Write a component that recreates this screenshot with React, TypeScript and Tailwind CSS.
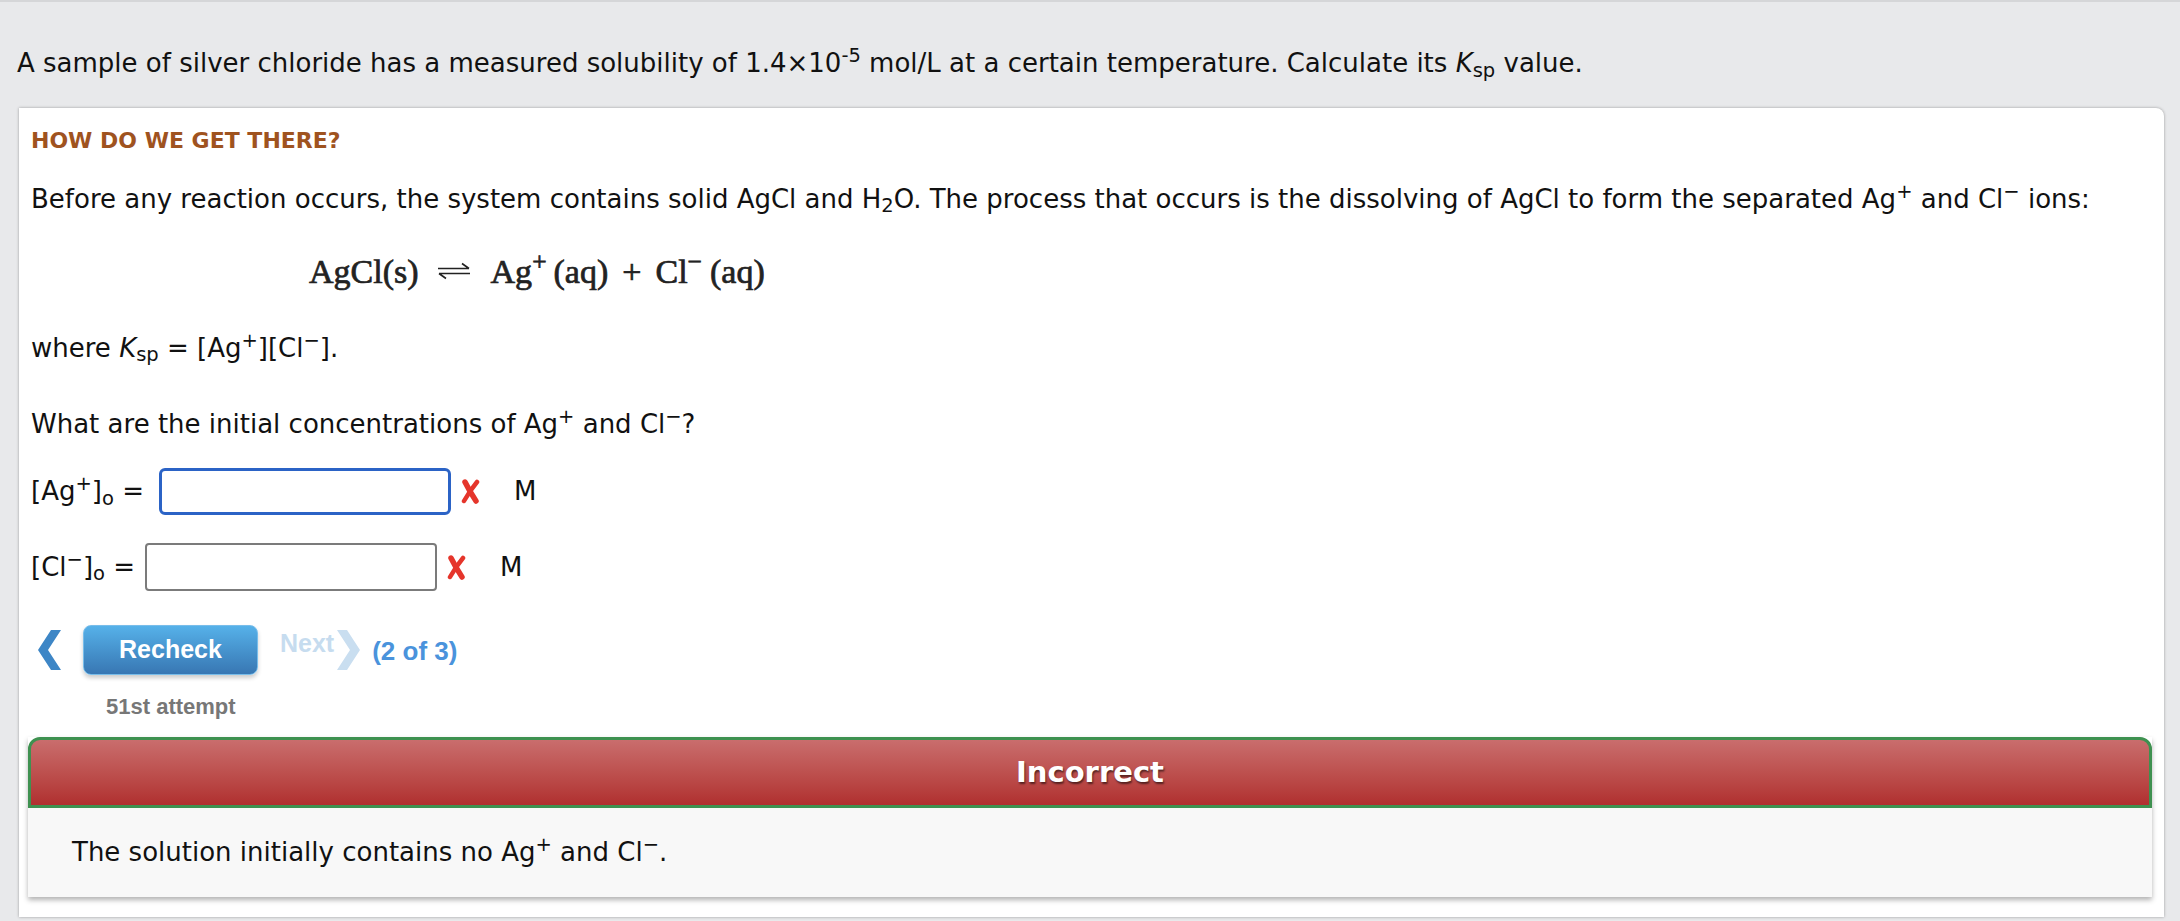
import React from "react"

const sans = { fontFamily: '"DejaVu Sans", Verdana, sans-serif' }

function Cross() {
    return (
        <svg width="21" height="25" viewBox="0 0 21 25" className="shrink-0">
            <path d="M5 3 C8 9 12 16 16 22" stroke="#e5352b" strokeWidth="5.5" strokeLinecap="round" fill="none" />
            <path d="M17 3 C12 9 8 15 4 22" stroke="#e5352b" strokeWidth="4.5" strokeLinecap="round" fill="none" />
        </svg>
    )
}

function Chevron({ dir, color }: { dir: "left" | "right"; color: string }) {
    const pts = dir === "left" ? "14,0 24,0 11,20 24,40 14,40 1,20" : "1,0 11,0 24,20 11,40 1,40 14,20"
    return (
        <svg width="25" height="40" viewBox="0 0 25 40">
            <polygon points={pts} fill={color} />
        </svg>
    )
}

function Harpoons() {
    return (
        <svg width="34" height="18" viewBox="0 0 34 18" className="ml-[18px] mr-[20px] inline-block">
            <path d="M1 6.5 H32 M32 6.5 L25 1.5" stroke="#222" strokeWidth="1.6" fill="none" />
            <path d="M33 11.5 H2 M2 11.5 L9 16.5" stroke="#222" strokeWidth="1.6" fill="none" />
        </svg>
    )
}

const Ksp = () => (
    <>
        <i>K</i>
        <sub>sp</sub>
    </>
)

export default function App() {
    return (
        <div className="min-h-[921px] w-[2180px] bg-[#e8e9eb] border-t-2 border-[#d5d6d8] text-[#111]" style={sans}>
            <div className="h-[106px] pt-[44px] pl-[17px] text-[26px] leading-[34px]">
                A sample of silver chloride has a measured solubility of 1.4×10<sup>-5</sup> mol/L at a certain temperature. Calculate its <Ksp /> value.
            </div>

            <div className="ml-[19px] mr-[16px] h-[809px] bg-white rounded-tr-[8px] shadow-[0_0_3px_rgba(0,0,0,0.35)] pl-[12px] pr-[12px]">
                <div className="h-[64px] flex items-center text-[22px] font-bold text-[#9f531f]">HOW DO WE GET THERE?</div>

                <div className="h-[54px] flex items-center text-[26px] whitespace-nowrap">
                    <span>
                        Before any reaction occurs, the system contains solid AgCl and H<sub>2</sub>O. The process that occurs is the dissolving of AgCl to form the separated Ag<sup>+</sup> and Cl<sup>−</sup> ions:
                    </span>
                </div>

                <div className="h-[90px] flex items-center pl-[278px] text-[34px] text-[#222] [-webkit-text-stroke:0.7px_#222]" style={{ fontFamily: '"Liberation Serif", "DejaVu Serif", serif' }}>
                    <span>AgCl(s)</span>
                    <Harpoons />
                    <span>
                        Ag<sup>+</sup>
                    </span>
                    <span className="ml-[7px]">(aq)</span>
                    <span className="mx-[14px]">+</span>
                    <span>
                        Cl<sup>−</sup>
                    </span>
                    <span className="ml-[8px]">(aq)</span>
                </div>

                <div className="h-[64px] flex items-center text-[26px]">
                    <span>
                        where <Ksp /> = [Ag<sup>+</sup>][Cl<sup>−</sup>].
                    </span>
                </div>

                <div className="h-[88px] flex items-center text-[26px]">
                    <span>
                        What are the initial concentrations of Ag<sup>+</sup> and Cl<sup>−</sup>?
                    </span>
                </div>

                <div className="h-[47px] flex items-center text-[26px]">
                    <span>
                        [Ag<sup>+</sup>]<sub>o</sub> =
                    </span>
                    <div className="ml-[15px] w-[292px] h-[47px] border-[3px] border-[#2b63c6] rounded-[6px] bg-white" />
                    <span className="ml-[9px]">
                        <Cross />
                    </span>
                    <span className="ml-[33px]">M</span>
                </div>

                <div className="mt-[28px] h-[48px] flex items-center text-[26px]">
                    <span>
                        [Cl<sup>−</sup>]<sub>o</sub> =
                    </span>
                    <div className="ml-[10px] w-[292px] h-[48px] border-2 border-[#7b7b7b] rounded-[4px] bg-white" />
                    <span className="ml-[9px]">
                        <Cross />
                    </span>
                    <span className="ml-[33px]">M</span>
                </div>

                <div className="mt-[34px] h-[50px] flex items-center" style={{ fontFamily: '"Liberation Sans", Arial, sans-serif' }}>
                    <span className="ml-[6px]">
                        <Chevron dir="left" color="#3d86c6" />
                    </span>
                    <button className="ml-[21px] w-[175px] h-[50px] rounded-[8px] border border-[#78bdea] bg-gradient-to-b from-[#56b1e9] to-[#3877b3] text-white font-bold text-[25px] shadow-[0_3px_4px_rgba(0,0,0,0.2)]">
                        Recheck
                    </button>
                    <span className="ml-[22px] -mt-[12px] text-[25px] font-bold text-[#c6dcef]">Next</span>
                    <span className="ml-[2px]">
                        <Chevron dir="right" color="#c9def0" />
                    </span>
                    <span className="ml-[11px] mt-[2px] text-[26px] font-bold text-[#4a93dc]">(2 of 3)</span>
                </div>

                <div className="h-[62px] flex items-center pl-[75px] text-[22px] font-bold text-[#777]" style={{ fontFamily: '"Liberation Sans", Arial, sans-serif' }}>
                    51st attempt
                </div>

                <div className="ml-[-3px] shadow-[0_3px_5px_rgba(0,0,0,0.3)]">
                    <div className="h-[71px] rounded-t-[12px] border-[3px] border-[#3e9150] bg-gradient-to-b from-[#c96d6d] to-[#b02f2f] flex items-center justify-center text-white font-bold text-[29px] [text-shadow:1px_2px_2px_rgba(0,0,0,0.55)]">
                        Incorrect
                    </div>
                    <div className="h-[89px] bg-[#f8f8f8] flex items-center pl-[44px] text-[26px]">
                        <span>
                            The solution initially contains no Ag<sup>+</sup> and Cl<sup>−</sup>.
                        </span>
                    </div>
                </div>
            </div>
        </div>
    )
}
